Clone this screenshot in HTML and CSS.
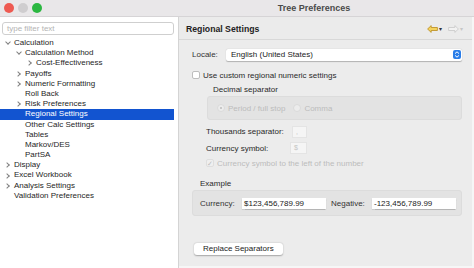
FILE: index.html
```html
<!DOCTYPE html>
<html>
<head>
<meta charset="utf-8">
<link rel="stylesheet" href="styles.css">
</head>
<body>
<div class="window">
  <div class="titlebar">
    <div class="lights">
      <span class="light red"></span>
      <span class="light gray"></span>
      <span class="light green"></span>
    </div>
    <div class="title">Tree Preferences</div>
  </div>
  <div class="main">
    <aside class="sidebar">
      <div class="filter">type filter text</div>
      <ul class="tree">
        <li class="row l0"><span class="tw open"></span>Calculation</li>
        <li class="row l1"><span class="tw open"></span>Calculation Method</li>
        <li class="row l2"><span class="tw"></span>Cost-Effectiveness</li>
        <li class="row l1"><span class="tw"></span>Payoffs</li>
        <li class="row l1"><span class="tw"></span>Numeric Formatting</li>
        <li class="row l1"><span class="tw none"></span>Roll Back</li>
        <li class="row l1"><span class="tw"></span>Risk Preferences</li>
        <li class="row l1 selected"><span class="tw none"></span>Regional Settings</li>
        <li class="row l1"><span class="tw none"></span>Other Calc Settings</li>
        <li class="row l1"><span class="tw none"></span>Tables</li>
        <li class="row l1"><span class="tw none"></span>Markov/DES</li>
        <li class="row l1"><span class="tw none"></span>PartSA</li>
        <li class="row l0"><span class="tw"></span>Display</li>
        <li class="row l0"><span class="tw"></span>Excel Workbook</li>
        <li class="row l0"><span class="tw"></span>Analysis Settings</li>
        <li class="row l0"><span class="tw none"></span>Validation Preferences</li>
      </ul>
    </aside>
    <section class="pane">
      <div class="pane-head">
        <div class="pane-title">Regional Settings</div>
        <div class="nav">
          <svg class="arrow" width="11" height="8" viewBox="0 0 11 8"><path d="M0.6 4 L4.2 0.6 V2.5 H10.4 V5.5 H4.2 V7.4 Z" fill="#f4d35e" stroke="#b98a1d" stroke-width="0.8" stroke-linejoin="round"/></svg>
          <span class="drop">▾</span>
          <svg class="arrow" width="11" height="8" viewBox="0 0 11 8"><path d="M10.4 4 L6.8 0.6 V2.5 H0.6 V5.5 H6.8 V7.4 Z" fill="#f2f2f2" stroke="#c8c8c8" stroke-width="0.8" stroke-linejoin="round"/></svg>
          <span class="drop dim">▾</span>
        </div>
      </div>
      <div class="pane-body">
        <div class="locale">
          <span class="lbl">Locale:</span>
          <div class="combo">English (United States)<span class="stepper"><svg width="6" height="7" viewBox="0 0 6 7"><path d="M1 2.6 L3 0.8 L5 2.6 M1 4.4 L3 6.2 L5 4.4" fill="none" stroke="#fff" stroke-width="1"/></svg></span></div>
        </div>
        <label class="check"><span class="box"></span>Use custom regional numeric settings</label>
        <div class="decimal">
          <div class="glabel">Decimal separator</div>
          <div class="group radios">
            <span class="radio on"><span class="dot"></span>Period / full stop</span>
            <span class="radio"><span class="dot"></span>Comma</span>
          </div>
        </div>
        <div class="fields">
          <div class="frow"><span class="flbl t">Thousands separator:</span><span class="sbox t">,</span></div>
          <div class="frow"><span class="flbl c">Currency symbol:</span><span class="sbox c">$</span></div>
          <label class="check dis"><span class="box on">✓</span>Currency symbol to the left of the number</label>
        </div>
        <div class="example">
          <div class="glabel">Example</div>
          <div class="group ex">
            <span class="exl cur">Currency:</span><span class="exf">$123,456,789.99</span>
            <span class="exl neg">Negative:</span><span class="exf">-123,456,789.99</span>
          </div>
        </div>
        <div class="btnrow"><button class="btn">Replace Separators</button></div>
      </div>
    </section>
  </div>
</div>
</body>
</html>
```
FILE: styles.css
```css
* { box-sizing: border-box; }
html, body { margin: 0; padding: 0; }
body {
  width: 474px; height: 268px; overflow: hidden;
  font-family: "Liberation Sans", Arial, sans-serif;
  font-size: 8px; color: #2a2a2a; background: #fff;
}
.window { width: 474px; height: 268px; display: flex; flex-direction: column; }
.titlebar {
  height: 17px; flex: none; display: flex; align-items: center;
  background: #e9e7e9; border-bottom: 1px solid #d6d4d6;
}
.lights { display: flex; gap: 4px; padding-left: 4px; flex: none; }
.light { width: 10px; height: 10px; border-radius: 50%; display: block; }
.red { background: #ee5a52; }
.gray { background: #cfcdcf; }
.green { background: #2bb741; }
.title {
  flex: 1; text-align: center; padding-left: 112px;
  font-weight: bold; font-size: 9px; color: #4a4a4a;
}
.main { flex: 1; display: flex; min-height: 0; }
.sidebar { width: 179px; flex: none; background: #fff; border-right: 1px solid #d4d4d4; padding-top: 5px; }
.filter {
  margin: 0 4px 0 2px; height: 13px; border: 1px solid #cfcfcf; border-radius: 3px;
  color: #b4b4b4; padding-left: 4px; line-height: 11px; font-size: 8px;
}
.tree { list-style: none; margin: 3px 0 0; padding: 0; }
.row { height: 10.2px; line-height: 10.2px; white-space: nowrap; display: flex; align-items: center; margin-right: 4px; color: #262626; }
.row.l0 { padding-left: 3px; }
.row.l1 { padding-left: 14px; }
.row.l2 { padding-left: 25px; }
.tw { width: 11px; height: 10px; flex: none; position: relative; }
.tw::before {
  content: ""; position: absolute; left: 2px; top: 3px; width: 3px; height: 3px;
  border-right: 1px solid #808080; border-bottom: 1px solid #808080; transform: rotate(-45deg);
}
.tw.open::before { transform: rotate(45deg); top: 2px; left: 2.5px; }
.tw.none::before { display: none; }
.row.selected { background: #1254d0; color: #fff; }
.pane { flex: 1; background: #ececec; display: flex; flex-direction: column; border-bottom: 2px solid #f6f6f6; border-right: 2px solid #f6f6f6; }
.pane-head {
  height: 23px; flex: none; display: flex; align-items: center; justify-content: space-between;
  border-bottom: 1px solid #d8d8d8; padding: 1px 9px 0 7px; background: #ebebeb;
}
.pane-title { font-weight: bold; font-size: 8.7px; color: #222; }
.nav { display: flex; align-items: center; gap: 1px; }
.arrow { display: block; }
.drop { font-size: 6px; color: #333; margin-right: 5px; }
.drop.dim { color: #c6c6c6; margin-right: 0; }
.pane-body { flex: 1; padding: 8px 10px 0 13px; display: flex; flex-direction: column; }
.locale { display: flex; align-items: center; height: 13px; }
.lbl { width: 34px; color: #333; }
.combo {
  flex: 1; height: 12px; background: #fff; border-radius: 2px; box-shadow: 0 0.5px 1px rgba(0,0,0,0.25);
  display: flex; align-items: center; justify-content: space-between; padding: 0 1px 0 5px; color: #222;
}
.stepper { width: 8px; height: 9px; background: #2a7de8; border-radius: 2px; display: flex; align-items: center; justify-content: center; }
.stepper svg { display: block; }
.check { display: flex; align-items: center; margin-top: 9px; height: 10px; color: #2a2a2a; }
.box {
  width: 8px; height: 8px; border: 1px solid #bdbdbd; border-radius: 2px; background: #fff;
  margin-right: 3px; flex: none; display: flex; align-items: center; justify-content: center; font-size: 7px; line-height: 1;
}
.decimal { margin-left: 15px; margin-top: 5px; }
.glabel { height: 10px; line-height: 10px; padding-left: 6px; color: #2a2a2a; }
.group { background: #e3e3e3; border: 1px solid #dcdcdc; border-radius: 3px; }
.radios { height: 24px; display: flex; align-items: center; padding-left: 9px; margin-top: 1px; color: #bcbcbc; }
.radio { display: flex; align-items: center; margin-right: 8px; }
.dot { width: 8px; height: 8px; border-radius: 50%; background: #ececec; border: 1px solid #dadada; margin-right: 3px; position: relative; }
.radio.on .dot::after { content: ""; position: absolute; left: 2px; top: 2px; width: 2px; height: 2px; border-radius: 50%; background: #bdbdbd; }
.fields { margin-left: 14px; margin-top: 5px; }
.frow { display: flex; align-items: center; height: 13px; margin-bottom: 3.5px; }
.flbl { color: #2a2a2a; white-space: nowrap; }
.flbl.t { width: 86px; }
.flbl.c { width: 84px; }
.sbox { height: 12px; background: #f5f5f5; border: 1px solid #e4e4e4; color: #c4c4c4; font-size: 7px; line-height: 10px; padding-left: 3px; }
.sbox.t { width: 15px; }
.sbox.c { width: 17px; }
.check.dis { margin-top: 0; color: #bcbcbc; }
.box.on { background: #efefef; border-color: #dedede; color: #bcbcbc; }
.example { margin-top: 11px; }
.example .glabel { padding-left: 8px; }
.group.ex { margin-top: 1px; height: 26px; display: flex; align-items: center; padding-left: 7px; }
.exl { color: #333; }
.exl.cur { width: 42px; }
.exl.neg { width: 41px; }
.exf { width: 84px; height: 11px; background: #fff; box-shadow: 0 0.5px 1px rgba(0,0,0,0.2); padding-left: 2px; line-height: 11px; color: #222; margin-right: 5px; }
.btnrow { margin-top: 27px; padding-left: 2px; }
.btn {
  font-family: inherit; font-size: 8px; color: #222; background: #fff; border: none; border-radius: 3px;
  box-shadow: 0 0.5px 1.5px rgba(0,0,0,0.3); height: 12px; padding: 0 9px; line-height: 12px; white-space: nowrap;
}
```
